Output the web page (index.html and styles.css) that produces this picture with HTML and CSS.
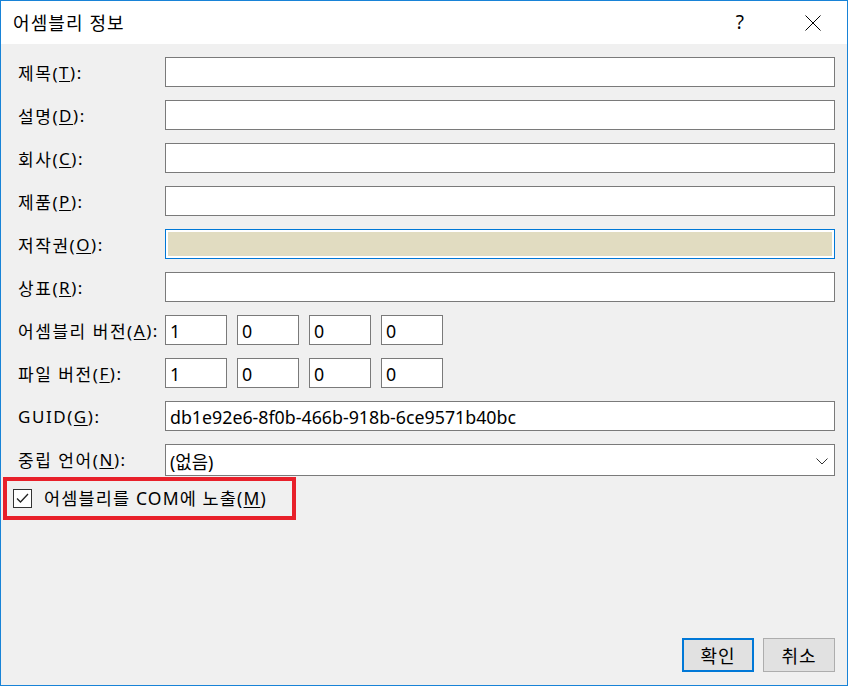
FILE: index.html
```html
<!DOCTYPE html>
<html lang="ko">
<head>
<meta charset="utf-8">
<title>어셈블리 정보</title>
<link rel="stylesheet" href="styles.css">
</head>
<body>
<div class="window">
  <div class="titlebar">
    <div class="title">어셈블리 정보</div>
    <div class="title-btns">
      <span class="help">?</span>
      <svg class="close" width="16" height="16" viewBox="0 0 16 16"><path d="M0.5 0.5 L15.5 15.5 M15.5 0.5 L0.5 15.5" stroke="#000" stroke-width="1" fill="none"/></svg>
    </div>
  </div>
  <div class="body">
    <div class="form">
      <label class="lbl">제목(<u>T</u>):</label>
      <div class="input"></div>
      <label class="lbl">설명(<u>D</u>):</label>
      <div class="input"></div>
      <label class="lbl">회사(<u>C</u>):</label>
      <div class="input"></div>
      <label class="lbl">제품(<u>P</u>):</label>
      <div class="input"></div>
      <label class="lbl">저작권(<u>O</u>):</label>
      <div class="input focused"><div class="tan"></div></div>
      <label class="lbl">상표(<u>R</u>):</label>
      <div class="input"></div>
      <label class="lbl">어셈블리 버전(<u>A</u>):</label>
      <div class="ver">
        <div class="input small">1</div>
        <div class="input small">0</div>
        <div class="input small">0</div>
        <div class="input small">0</div>
      </div>
      <label class="lbl">파일 버전(<u>F</u>):</label>
      <div class="ver">
        <div class="input small">1</div>
        <div class="input small">0</div>
        <div class="input small">0</div>
        <div class="input small">0</div>
      </div>
      <label class="lbl">GUID(<u>G</u>):</label>
      <div class="input">db1e92e6-8f0b-466b-918b-6ce9571b40bc</div>
      <label class="lbl">중립 언어(<u>N</u>):</label>
      <div class="input select">(없음)
        <svg class="chev" width="12" height="7" viewBox="0 0 12 7"><path d="M0.5 0.5 L6 6 L11.5 0.5" stroke="#333" stroke-width="1" fill="none"/></svg>
      </div>
    </div>
    <div class="highlight">
      <span class="cb"><svg width="17" height="17" viewBox="0 0 17 17"><path d="M3 8.5 L6.5 12 L14 4" stroke="#222" stroke-width="1.3" fill="none"/></svg></span>
      <span class="cb-text">어셈블리를 COM에 노출(<u>M</u>)</span>
    </div>
    <div class="footer">
      <button class="btn primary">확인</button>
      <button class="btn">취소</button>
    </div>
  </div>
</div>
</body>
</html>
```

FILE: styles.css
```css
html, body {
  margin: 0;
  padding: 0;
  background: #ffffff;
}
body {
  font-family: "Noto Sans", "Noto Sans CJK KR", sans-serif;
  font-size: 16px;
  color: #000;
}
.window {
  box-sizing: border-box;
  width: 848px;
  height: 686px;
  border: 1px solid #1883d7;
  display: flex;
  flex-direction: column;
  background: #f0f0f0;
}
.titlebar {
  height: 43px;
  background: #ffffff;
  display: flex;
  align-items: center;
  justify-content: space-between;
  padding: 0 26px 0 12px;
}
.title {
  font-size: 18px;
  letter-spacing: 1.1px;
  padding-bottom: 1px;
}
.title-btns {
  display: flex;
  align-items: center;
  gap: 61px;
}
.help {
  font-size: 19px;
  line-height: 1;
}
.close {
  display: block;
  margin-top: 1px;
}
.body {
  flex: 1;
  display: flex;
  flex-direction: column;
}
.form {
  display: grid;
  grid-template-columns: 147px 1fr;
  grid-auto-rows: 30px;
  row-gap: 13px;
  padding: 13px 12px 0 17px;
}
.lbl {
  display: flex;
  align-items: center;
  font-size: 17px;
  white-space: nowrap;
  letter-spacing: 1.55px;
}
.lbl u {
  text-underline-offset: 2px;
}
.input {
  box-sizing: border-box;
  height: 30px;
  border: 1px solid #7a7a7a;
  background: #fff;
  display: flex;
  align-items: center;
  padding: 2px 0 0 4px;
  font-size: 17.8px;
}
.input.focused {
  border-color: #0078d7;
  padding: 2px;
}
.tan {
  width: 100%;
  height: 100%;
  background: #e1dcc1;
}
.ver {
  display: flex;
  gap: 10px;
}
.input.small {
  width: 62px;
}
.input.select {
  position: relative;
  height: 32px;
}
.chev {
  position: absolute;
  right: 6px;
  top: 13px;
}
.highlight {
  box-sizing: border-box;
  width: 293px;
  height: 43px;
  margin: 3px 0 0 2px;
  border: 4px solid #e8202a;
  display: flex;
  align-items: center;
  padding-left: 6px;
  gap: 12px;
}
.cb {
  box-sizing: border-box;
  width: 19px;
  height: 19px;
  border: 1px solid #333;
  background: #fff;
  display: flex;
  align-items: center;
  justify-content: center;
}
.cb svg {
  display: block;
}
.cb-text {
  font-size: 17.5px;
  letter-spacing: 1.15px;
  padding-bottom: 2px;
}
.cb-text u {
  text-underline-offset: 2px;
}
.footer {
  margin-top: auto;
  display: flex;
  justify-content: flex-end;
  gap: 9px;
  padding: 0 12px 13px 0;
}
.btn {
  box-sizing: border-box;
  width: 72px;
  height: 34px;
  background: #e1e1e1;
  border: 1px solid #adadad;
  font-family: "Noto Sans", "Noto Sans CJK KR", sans-serif;
  font-size: 18px;
  letter-spacing: 1px;
  color: #000;
  padding: 0;
}
.btn.primary {
  border: 2px solid #0078d7;
}
```
